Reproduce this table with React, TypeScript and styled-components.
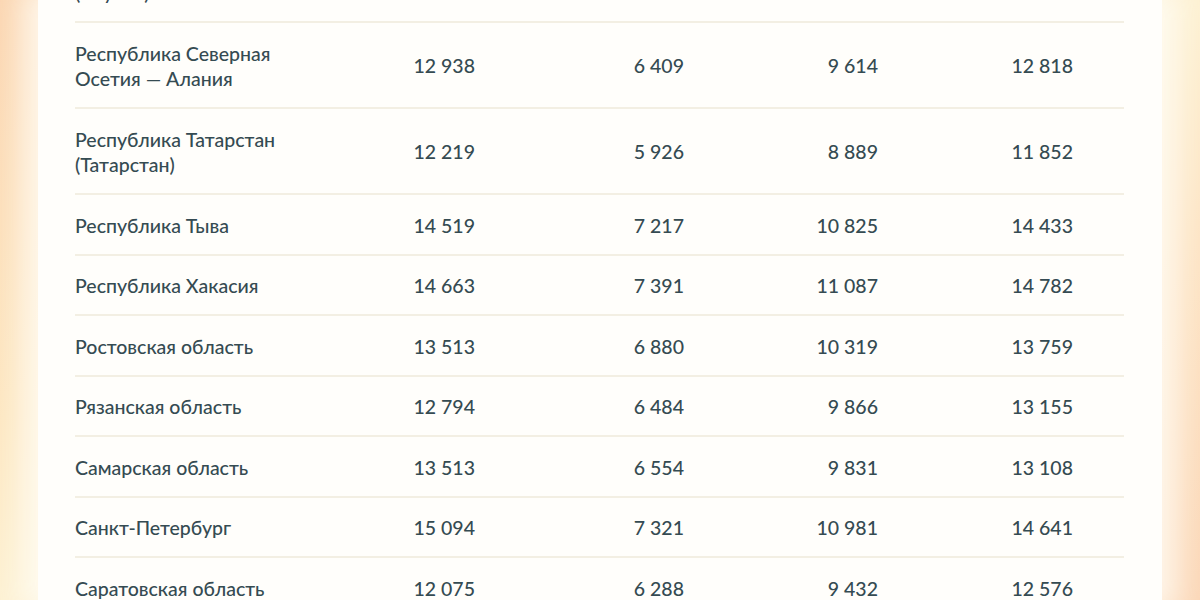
import React from 'react';
import styled, { createGlobalStyle } from 'styled-components';

const GlobalStyle = createGlobalStyle`
  html, body {
    margin: 0;
    padding: 0;
    height: 100%;
  }

  body {
    background: linear-gradient(to bottom right, #fbd5b0 0%, #fde7c1 35%, #fdf1d2 50%, #fde4c4 70%, #fbd6b6 100%);
    font-family: Lato, "Noto Sans", "Liberation Sans", sans-serif;
    overflow: hidden;
  }
`;

const Page = styled.div`
  height: 600px;
  overflow: hidden;
  padding: 0 38px;
`;

const Card = styled.div`
  display: flow-root;
  background: #fffefb;
  box-shadow: 0 0 30px 16px rgba(255, 253, 246, 0.85);
  padding: 0 38px 0 37px;
  height: 100%;
`;

const Table = styled.div`
  margin-top: -63px;
`;

const Row = styled.div`
  display: grid;
  grid-template-columns: 240px 160px 209px 194px 195px;
  align-items: center;
  padding: 17.5px 0 15.5px;
  border-bottom: 2px solid #f3efe3;
  color: #354b52;
  font-size: 19.5px;
  line-height: 25.5px;
  font-weight: 500;
`;

const Name = styled.div`
  padding-right: 8px;
  white-space: pre-line;
`;

const Value = styled.div`
  text-align: right;
  font-variant-numeric: tabular-nums;
`;

interface Region {
  name: string;
  values: [string, string, string, string];
}

const regions: Region[] = [
  { name: 'Республика Саха\n(Якутия)', values: ['', '', '', ''] },
  { name: 'Республика Северная Осетия — Алания', values: ['12 938', '6 409', '9 614', '12 818'] },
  { name: 'Республика Татарстан (Татарстан)', values: ['12 219', '5 926', '8 889', '11 852'] },
  { name: 'Республика Тыва', values: ['14 519', '7 217', '10 825', '14 433'] },
  { name: 'Республика Хакасия', values: ['14 663', '7 391', '11 087', '14 782'] },
  { name: 'Ростовская область', values: ['13 513', '6 880', '10 319', '13 759'] },
  { name: 'Рязанская область', values: ['12 794', '6 484', '9 866', '13 155'] },
  { name: 'Самарская область', values: ['13 513', '6 554', '9 831', '13 108'] },
  { name: 'Санкт-Петербург', values: ['15 094', '7 321', '10 981', '14 641'] },
  { name: 'Саратовская область', values: ['12 075', '6 288', '9 432', '12 576'] },
];

const App: React.FC = () => {
  return (
    <>
      <GlobalStyle />
      <Page>
        <Card>
          <Table>
            {regions.map((region) => (
              <Row key={region.name}>
                <Name>{region.name}</Name>
                {region.values.map((value, i) => (
                  <Value key={i}>{value}</Value>
                ))}
              </Row>
            ))}
          </Table>
        </Card>
      </Page>
    </>
  );
};

export default App;
